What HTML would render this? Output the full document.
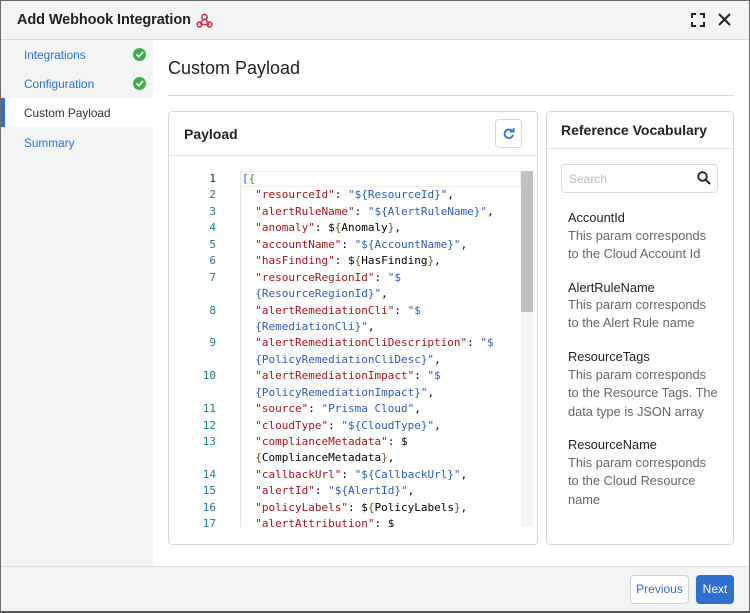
<!DOCTYPE html><html><head><style>
*{box-sizing:border-box;margin:0;padding:0}
body{width:750px;height:613px;background:#fff;font-family:"Liberation Sans",sans-serif;position:relative;overflow:hidden}
.a{position:absolute}
.frame{left:0;top:0;width:750px;height:613px;border:1px solid #6b6b6b;border-bottom:2px solid #555}
.hdr{left:1px;top:1px;width:748px;height:39px;background:#f3f4f4;border-bottom:1px solid #dcdcdc}
.side{left:1px;top:40px;width:152px;height:526px;background:#f3f4f4}
.foot{left:1px;top:566px;width:748px;height:45px;background:#f3f4f4;border-top:1px solid #dcdcdc}
.nav{left:24px;font-size:11.8px;color:#2f6fcd}
.chk{width:13px;height:13px;border-radius:50%;background:#3fae49;left:133px}
.card{border:1px solid #d8d8d8;border-radius:4px;background:#fff}
pre{font-family:"DejaVu Sans Mono",monospace;font-size:11px;line-height:16.43px}
.k{color:#a31515}.s{color:#2a5db0}.b{color:#7a4b1e}
.ln{color:#237893;text-align:right;width:40px}
.vt{font-size:12.8px;color:#222;left:568px}
.vd{font-size:12.8px;color:#666;line-height:18.3px;left:568px}
</style></head><body>
<div class="a hdr"></div>
<div class="a" style="left:17px;top:12px;font-size:14.5px;font-weight:bold;color:#222;letter-spacing:-0.1px">Add Webhook Integration</div>
<svg class="a" style="left:196px;top:13px" width="17" height="15" viewBox="0 0 17 15"><g fill="none" stroke="#c0354a" stroke-width="1.6"><circle cx="8.5" cy="4" r="2.6"/><circle cx="3.5" cy="11.5" r="2.4"/><circle cx="13.5" cy="11.5" r="2.4"/><path d="M7 6.5L4 11.5M6 11.5h7.5M10 6.5l3 5"/></g></svg>
<svg class="a" style="left:691px;top:13px" width="14" height="14" viewBox="0 0 14 14"><path d="M1 5V1h4M9 1h4v4M13 9v4H9M5 13H1V9" fill="none" stroke="#222" stroke-width="2"/></svg>
<svg class="a" style="left:718px;top:13px" width="13" height="13" viewBox="0 0 13 13"><path d="M1 1l11 11M12 1L1 12" stroke="#222" stroke-width="2"/></svg>
<div class="a side"></div>
<div class="a nav" style="top:48px">Integrations</div><div class="a chk" style="top:48px"></div>
<div class="a nav" style="top:77px">Configuration</div><div class="a chk" style="top:77px"></div>
<div class="a" style="left:1px;top:98px;width:152px;height:29px;background:#fff;border-left:4px solid #2f6fcd"></div>
<div class="a" style="left:24px;top:106px;font-size:11.8px;color:#333">Custom Payload</div>
<div class="a nav" style="top:136px">Summary</div>
<svg class="a" style="left:136px;top:51px" width="8" height="7"><path d="M0.5 3.5l2.3 2.3L7 1" fill="none" stroke="#fff" stroke-width="1.6"/></svg>
<svg class="a" style="left:136px;top:80px" width="8" height="7"><path d="M0.5 3.5l2.3 2.3L7 1" fill="none" stroke="#fff" stroke-width="1.6"/></svg>
<div class="a" style="left:168px;top:58px;font-size:18px;color:#222">Custom Payload</div>
<div class="a" style="left:168px;top:95px;width:566px;height:1px;background:#dcdcdc"></div>
<div class="a card" style="left:168px;top:111px;width:370px;height:434px"></div>
<div class="a" style="left:169px;top:155px;width:368px;height:1px;background:#e0e0e0"></div>
<div class="a" style="left:184px;top:126px;font-size:14px;font-weight:bold;color:#222">Payload</div>
<div class="a card" style="left:495px;top:119px;width:27px;height:29px"></div>
<svg class="a" style="left:502px;top:127px" width="13" height="13" viewBox="0 0 13 13"><path d="M10.5 4.5A4.3 4.3 0 1 0 11 8" fill="none" stroke="#2f6fcd" stroke-width="1.8"/><path d="M8 4.6h3.6V1" fill="none" stroke="#2f6fcd" stroke-width="1.8"/></svg>
<div class="a" style="left:240px;top:171px;width:293px;height:356px;border-left:1px solid #e6e6e6;overflow:hidden">
<div class="a" style="left:0;top:0;width:280px;height:16px;border:1px solid #eee;border-left:0"></div>
<div class="a" style="left:280px;top:0;width:13px;height:356px;background:#f4f4f4"></div>
<div class="a" style="left:280px;top:0;width:12px;height:141px;background:#c1c1c1"></div>
</div>
<pre class="a ln" style="left:176px;top:171px"><span style="color:#0b216f">1</span>
2
3
4
5
6
7

8

9

10

11
12
13

14
15
16
17</pre>
<div class="a" style="left:241px;top:171px;width:279px;height:356px;overflow:hidden">
<pre style="padding-left:1px"><span class="s">[</span><span style="color:#319331">{</span>
  <span class="k">"resourceId"</span>: <span class="s">"${ResourceId}"</span>,
  <span class="k">"alertRuleName"</span>: <span class="s">"${AlertRuleName}"</span>,
  <span class="k">"anomaly"</span>: $<span class="b">{</span>Anomaly<span class="b">}</span>,
  <span class="k">"accountName"</span>: <span class="s">"${AccountName}"</span>,
  <span class="k">"hasFinding"</span>: $<span class="b">{</span>HasFinding<span class="b">}</span>,
  <span class="k">"resourceRegionId"</span>: <span class="s">"$</span>
  <span class="s">{ResourceRegionId}"</span>,
  <span class="k">"alertRemediationCli"</span>: <span class="s">"$</span>
  <span class="s">{RemediationCli}"</span>,
  <span class="k">"alertRemediationCliDescription"</span>: <span class="s">"$</span>
  <span class="s">{PolicyRemediationCliDesc}"</span>,
  <span class="k">"alertRemediationImpact"</span>: <span class="s">"$</span>
  <span class="s">{PolicyRemediationImpact}"</span>,
  <span class="k">"source"</span>: <span class="s">"Prisma Cloud"</span>,
  <span class="k">"cloudType"</span>: <span class="s">"${CloudType}"</span>,
  <span class="k">"complianceMetadata"</span>: $
  <span class="b">{</span>ComplianceMetadata<span class="b">}</span>,
  <span class="k">"callbackUrl"</span>: <span class="s">"${CallbackUrl}"</span>,
  <span class="k">"alertId"</span>: <span class="s">"${AlertId}"</span>,
  <span class="k">"policyLabels"</span>: $<span class="b">{</span>PolicyLabels<span class="b">}</span>,
  <span class="k">"alertAttribution"</span>: $</pre></div>
<div class="a card" style="left:546px;top:111px;width:188px;height:434px"></div>
<div class="a" style="left:547px;top:148px;width:186px;height:1px;background:#e0e0e0"></div>
<div class="a" style="left:561px;top:122px;font-size:14px;font-weight:bold;color:#222">Reference Vocabulary</div>
<div class="a card" style="left:561px;top:164px;width:157px;height:29px;border-color:#ddd"></div>
<div class="a" style="left:569px;top:172px;font-size:12px;color:#bbb">Search</div>
<svg class="a" style="left:697px;top:171px" width="14" height="14" viewBox="0 0 14 14"><circle cx="5.5" cy="5.5" r="4.3" fill="none" stroke="#222" stroke-width="1.8"/><path d="M8.7 8.7L13 13" stroke="#222" stroke-width="2"/></svg>
<div class="a vt" style="top:210px">AccountId</div>
<div class="a vd" style="top:227px">This param corresponds<br>to the Cloud Account Id</div>
<div class="a vt" style="top:280px">AlertRuleName</div>
<div class="a vd" style="top:296px">This param corresponds<br>to the Alert Rule name</div>
<div class="a vt" style="top:349px">ResourceTags</div>
<div class="a vd" style="top:366px">This param corresponds<br>to the Resource Tags. The<br>data type is JSON array</div>
<div class="a vt" style="top:437px">ResourceName</div>
<div class="a vd" style="top:454px">This param corresponds<br>to the Cloud Resource<br>name</div>
<div class="a foot"></div>
<div class="a" style="left:630px;top:575px;width:59px;height:29px;background:#fff;border:1px solid #d0d0d0;border-radius:4px;color:#2f6fcd;font-size:12px;text-align:center;line-height:27px">Previous</div>
<div class="a" style="left:696px;top:575px;width:38px;height:29px;background:#2f6fcd;border-radius:4px;color:#fff;font-size:12px;text-align:center;line-height:29px">Next</div>
<div class="a frame"></div>
</body></html>
